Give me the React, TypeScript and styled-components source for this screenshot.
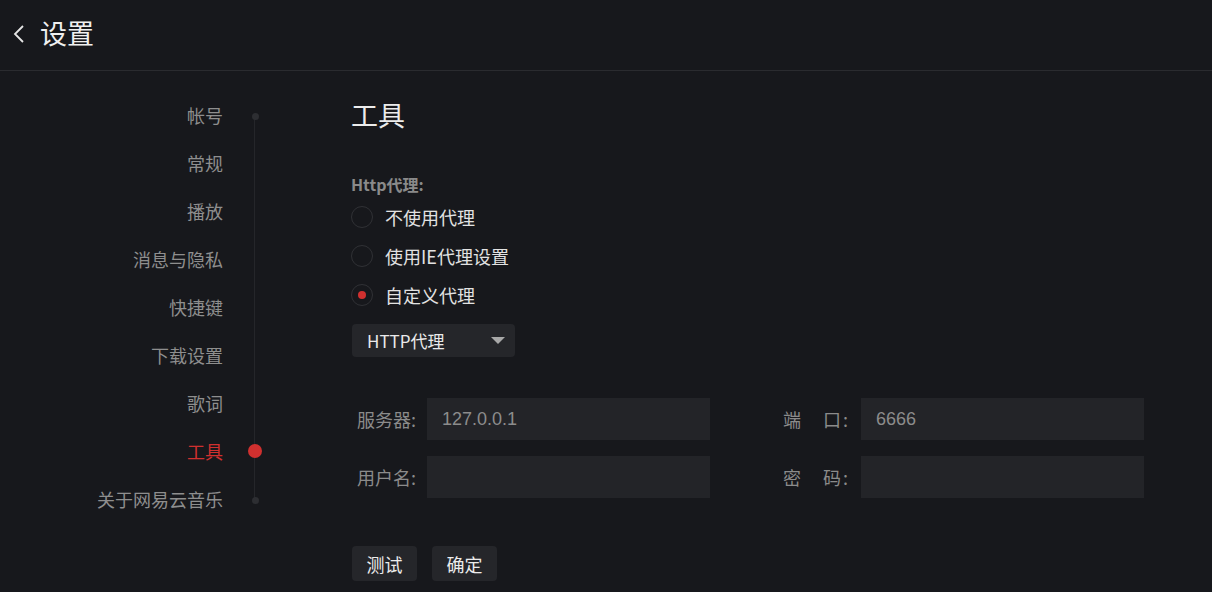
import React, { useState } from 'react'
import styled, { createGlobalStyle } from 'styled-components'

const GlobalStyle = createGlobalStyle`
  html, body {
    margin: 0;
    padding: 0;
    background: #17181c;
  }
  body {
    font-family: "Noto Sans CJK SC", "Liberation Sans", sans-serif;
    color: #e0e0e0;
  }
`

const Page = styled.div`
  width: 1212px;
  height: 592px;
  overflow: hidden;
  background: #17181c;
`

const Header = styled.div`
  height: 70px;
  border-bottom: 1px solid #2a2b2f;
  display: flex;
  align-items: center;
  padding-left: 10px;
  gap: 12px;
`

const BackBtn = styled.button`
  background: none;
  border: none;
  padding: 0;
  display: flex;
  cursor: pointer;
`

const Title = styled.h1`
  margin: 0 0 6px;
  font-size: 27px;
  font-weight: 400;
  color: #f0f0f0;
`

const Body = styled.div`
  display: flex;
  gap: 64px;
`

const Sidebar = styled.ul`
  list-style: none;
  margin: 0;
  padding: 20px 0 0;
  width: 287px;
`

const NavItem = styled.li`
  display: flex;
  height: 48px;
  align-items: center;
`

const NavText = styled.span<{ $active?: boolean }>`
  width: 223px;
  text-align: right;
  font-size: 18px;
  color: ${p => (p.$active ? '#d0302f' : '#8e8e8e')};
  cursor: pointer;
`

const Track = styled.span<{ $first?: boolean; $last?: boolean }>`
  position: relative;
  width: 64px;
  height: 100%;
  display: flex;
  align-items: center;
  justify-content: center;

  &::before {
    content: '';
    position: absolute;
    left: 31px;
    width: 1px;
    background: #25262a;
    top: ${p => (p.$first ? '50%' : '0')};
    bottom: ${p => (p.$last ? '50%' : '0')};
  }
`

const Dot = styled.span<{ $active?: boolean; $first?: boolean; $last?: boolean }>`
  position: relative;
  top: ${p => (p.$active ? '0' : '1px')};
  width: ${p => (p.$active ? '14px' : '7px')};
  height: ${p => (p.$active ? '14px' : '7px')};
  border-radius: 50%;
  background: ${p => (p.$active ? '#d0302f' : '#2d2e32')};
  opacity: ${p => (p.$first || p.$last || p.$active ? 1 : 0)};
`

const Content = styled.div`
  padding-top: 20px;
  display: flex;
  flex-direction: column;
  align-items: flex-start;
`

const SectionTitle = styled.h2`
  margin: 0;
  line-height: 48px;
  font-size: 27px;
  font-weight: 400;
  color: #ececec;
`

const GroupLabel = styled.div`
  margin-top: 33px;
  line-height: 24px;
  font-size: 16px;
  font-weight: 700;
  color: #8a8a8a;
`

const RadioList = styled.div`
  margin-top: 1px;
  display: flex;
  flex-direction: column;
`

const RadioRow = styled.label`
  height: 39px;
  display: flex;
  align-items: center;
  gap: 12px;
  font-size: 18px;
  color: #e2e2e2;
  cursor: pointer;
`

const RadioCircle = styled.span<{ $checked?: boolean }>`
  width: 20px;
  height: 20px;
  border: 1px solid #303135;
  border-radius: 50%;
  display: flex;
  align-items: center;
  justify-content: center;

  &::after {
    content: '';
    width: 8px;
    height: 8px;
    border-radius: 50%;
    background: #d0302f;
    display: ${p => (p.$checked ? 'block' : 'none')};
  }
`

const Select = styled.div`
  margin-top: 10px;
  margin-left: 1px;
  width: 163px;
  height: 33px;
  box-sizing: border-box;
  padding: 0 10px 0 15px;
  border-radius: 4px;
  background: #25262a;
  display: flex;
  align-items: center;
  justify-content: space-between;
  font-size: 17px;
  color: #eaeaea;
`

const Caret = styled.span`
  width: 0;
  height: 0;
  border-left: 7px solid transparent;
  border-right: 7px solid transparent;
  border-top: 7px solid #a8a8a8;
`

const FormGrid = styled.div`
  margin-top: 41px;
  display: grid;
  grid-template-columns: 76px 283px 151px 283px;
  grid-auto-rows: 42px;
  row-gap: 16px;
  align-items: center;
`

const FieldLabel = styled.span<{ $spaced?: boolean }>`
  text-align: right;
  padding-right: 11px;
  font-size: 18px;
  color: #8b8b8b;
  white-space: pre;
  letter-spacing: ${p => (p.$spaced ? '2px' : '0')};
`

const Input = styled.input`
  height: 42px;
  box-sizing: border-box;
  border: none;
  outline: none;
  background: #232428;
  padding: 0 15px;
  font-family: "Liberation Sans", "Noto Sans CJK SC", sans-serif;
  font-size: 18px;
  color: #8c8c8c;
`

const Actions = styled.div`
  margin-top: 48px;
  margin-left: 1px;
  display: flex;
  gap: 15px;
`

const Button = styled.button`
  width: 65px;
  height: 35px;
  border: none;
  border-radius: 4px;
  background: #25262a;
  font-family: "Noto Sans CJK SC", sans-serif;
  font-size: 18px;
  color: #ececec;
  cursor: pointer;
`

const navItems = ['帐号', '常规', '播放', '消息与隐私', '快捷键', '下载设置', '歌词', '工具', '关于网易云音乐']
const proxyOptions = ['不使用代理', '使用IE代理设置', '自定义代理']

export default function App() {
  const [active, setActive] = useState(7)
  const [proxy, setProxy] = useState(2)

  return (
    <>
      <GlobalStyle />
      <Page>
        <Header>
          <BackBtn>
            <svg width="18" height="24" viewBox="0 0 18 24">
              <polyline points="13,3 5,11 13,19" fill="none" stroke="#e6e6e6" strokeWidth="1.8" />
            </svg>
          </BackBtn>
          <Title>设置</Title>
        </Header>
        <Body>
          <Sidebar>
            {navItems.map((name, i) => (
              <NavItem key={name} onClick={() => setActive(i)}>
                <NavText $active={i === active}>{name}</NavText>
                <Track $first={i === 0} $last={i === navItems.length - 1}>
                  <Dot $active={i === active} $first={i === 0} $last={i === navItems.length - 1} />
                </Track>
              </NavItem>
            ))}
          </Sidebar>
          <Content>
            <SectionTitle>工具</SectionTitle>
            <GroupLabel>Http代理:</GroupLabel>
            <RadioList>
              {proxyOptions.map((opt, i) => (
                <RadioRow key={opt} onClick={() => setProxy(i)}>
                  <RadioCircle $checked={i === proxy} />
                  {opt}
                </RadioRow>
              ))}
            </RadioList>
            <Select>
              HTTP代理
              <Caret />
            </Select>
            <FormGrid>
              <FieldLabel>服务器:</FieldLabel>
              <Input defaultValue="127.0.0.1" />
              <FieldLabel $spaced>{'端\u3000口:'}</FieldLabel>
              <Input defaultValue="6666" />
              <FieldLabel>用户名:</FieldLabel>
              <Input />
              <FieldLabel $spaced>{'密\u3000码:'}</FieldLabel>
              <Input type="password" />
            </FormGrid>
            <Actions>
              <Button>测试</Button>
              <Button>确定</Button>
            </Actions>
          </Content>
        </Body>
      </Page>
    </>
  )
}
